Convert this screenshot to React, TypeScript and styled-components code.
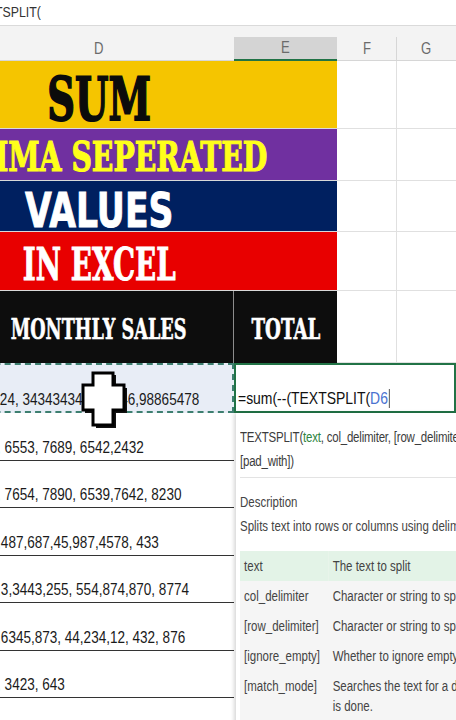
import React from "react";
import styled, { createGlobalStyle } from "styled-components";

const BODY_FONT = `"Liberation Sans", Arial, sans-serif`;
const SERIF = `"DejaVu Serif", "Liberation Serif", serif`;
const SANS_HEAVY = `"DejaVu Sans", "Liberation Sans", sans-serif`;

const GlobalStyle = createGlobalStyle`
  html, body { margin: 0; padding: 0; background: #ffffff; }
  body { font-family: ${BODY_FONT}; overflow: hidden; }
  * { box-sizing: border-box; }
`;

const Page = styled.div`
  width: 456px;
  height: 720px;
  overflow: hidden;
  background: #ffffff;
`;

/* Calibri-like narrow text: Liberation Sans compressed horizontally */
const Narrow = styled.span<{ $origin?: string }>`
  display: inline-block;
  white-space: nowrap;
  transform: scaleX(0.82);
  transform-origin: ${(p) => p.$origin ?? "left center"};
`;

const FormulaBar = styled.div`
  height: 26px;
  border-bottom: 1px solid #dadada;
  display: flex;
  align-items: center;
`;

const FormulaText = styled.div`
  font-size: 15px;
  color: #333333;
  margin-left: -5px;
  margin-top: -2px;
`;

const HeaderStrip = styled.div`
  background: #f3f3f3;
  padding-top: 11px;
`;

const Shift = styled.div`
  margin-left: -36px;
  width: 492px;
`;

const ColHeaders = styled.div`
  display: flex;
  height: 24px;
`;

const ColHeader = styled.div<{ $w: number; $active?: boolean; $divider?: boolean }>`
  width: ${(p) => p.$w}px;
  flex: none;
  display: flex;
  align-items: center;
  justify-content: center;
  font-size: 16px;
  color: #6b6b6b;
  background: ${(p) => (p.$active ? "#d4d4d4" : "transparent")};
  border-bottom: ${(p) => (p.$active ? "2px solid #217346" : "1px solid #d6d6d6")};
  border-right: ${(p) => (p.$divider ? "1px solid #d6d6d6" : "none")};
`;

const Body = styled.div`
  position: relative;
`;

const Row = styled.div<{ $h: number }>`
  display: flex;
  height: ${(p) => p.$h}px;
`;

const BandCell = styled.div<{ $bg: string; $pt: number }>`
  width: 373px;
  flex: none;
  background: ${(p) => p.$bg};
  border-bottom: 1px solid #d9d9d9;
  display: flex;
  align-items: center;
  justify-content: center;
  padding-right: 103px;
  padding-top: ${(p) => p.$pt}px;
  white-space: nowrap;
`;

const Banner = styled.span<{
  $font: string;
  $size: number;
  $color: string;
  $sx: number;
  $stroke: number;
}>`
  display: inline-block;
  font-family: ${(p) => p.$font};
  font-weight: 700;
  font-size: ${(p) => p.$size}px;
  line-height: 1;
  color: ${(p) => p.$color};
  -webkit-text-stroke: ${(p) => p.$stroke}px ${(p) => p.$color};
  transform: scaleX(${(p) => p.$sx});
  white-space: nowrap;
  flex: none;
`;

const DarkCell = styled.div<{ $w: number; $divider?: boolean }>`
  width: ${(p) => p.$w}px;
  flex: none;
  background: #0d0d0d;
  border-right: ${(p) => (p.$divider ? "1px solid #8c8c8c" : "none")};
  display: flex;
  align-items: center;
  justify-content: center;
  padding-top: 6px;
  overflow: hidden;
`;

const GridCell = styled.div<{ $w?: number; $divider?: boolean }>`
  width: ${(p) => (p.$w ? `${p.$w}px` : "auto")};
  flex: ${(p) => (p.$w ? "none" : "1")};
  background: #ffffff;
  border-bottom: 1px solid #e0e0e0;
  border-right: ${(p) => (p.$divider ? "1px solid #e0e0e0" : "none")};
`;

const RefCell = styled.div`
  width: 270px;
  flex: none;
  background: #e8edf6;
  border: 2px dashed #3e7f70;
  display: flex;
  align-items: flex-end;
  padding: 0 0 1px 0;
  overflow: hidden;
  white-space: nowrap;
  font-size: 16.5px;
  line-height: 22px;
  color: #1a1a1a;
`;

const EditCell = styled.div`
  flex: 1;
  border: 2px solid #217346;
  background: #ffffff;
  display: flex;
  align-items: flex-end;
  padding: 0 0 1px 2px;
  white-space: nowrap;
  font-size: 17px;
  line-height: 22px;
  color: #111111;
`;

const RefText = styled.span`
  color: #4a72d0;
`;

const Caret = styled.span`
  display: inline-block;
  width: 1.5px;
  height: 19px;
  background: #333333;
  margin-left: 1px;
  vertical-align: -4px;
`;

const DataCell = styled.div`
  width: 270px;
  flex: none;
  border-bottom: 1px solid #333333;
  display: flex;
  align-items: flex-end;
  padding: 0 0 2px 3px;
  overflow: hidden;
  white-space: nowrap;
  font-size: 16.5px;
  line-height: 22px;
  color: #1a1a1a;
`;

const Filler = styled.div`
  flex: 1;
  background: #ffffff;
`;

const CursorMark = styled.svg`
  position: absolute;
  left: 118px;
  top: 311px;
  width: 48px;
  height: 60px;
  overflow: visible;
`;

const Tooltip = styled.div`
  position: absolute;
  left: 272px;
  top: 352px;
  width: 560px;
  height: 420px;
  background: #ffffff;
  box-shadow: -2px 0 4px rgba(0, 0, 0, 0.16);
  padding: 12px 0 0 4px;
  font-size: 14px;
  color: #3c3c3c;
  overflow: hidden;
`;

const TipBody = styled.div`
  width: 700px;
  transform: scaleX(0.82);
  transform-origin: left top;
`;

const SigLine = styled.div`
  line-height: 24px;
  white-space: nowrap;
  letter-spacing: -0.25px;
`;

const Arg = styled.span`
  color: #2e8540;
`;

const Divider = styled.div`
  height: 1px;
  background: #e3e3e3;
  margin-top: 4px;
`;

const DescTitle = styled.div`
  margin-top: 12px;
  line-height: 24px;
  color: #444444;
  white-space: nowrap;
`;

const DescText = styled.div`
  line-height: 24px;
  color: #444444;
  white-space: nowrap;
`;

const ArgTable = styled.div`
  margin-top: 13px;
  display: grid;
  grid-template-columns: 108px 1fr;
  background: #f5f5f5;
  padding-bottom: 20px;
`;

const ArgCell = styled.div<{ $hl?: boolean }>`
  padding: 5px 0 5px 5px;
  line-height: 20px;
  white-space: nowrap;
  color: #444444;
  background: ${(p) => (p.$hl ? "#e3f3e7" : "transparent")};
`;

const bands = [
  { h: 68, bg: "#f5c500", pt: 8, text: "SUM", font: SERIF, size: 60, color: "#0b0b0b", sx: 0.64, stroke: 2 },
  { h: 52, bg: "#7030a0", pt: 5, text: "COMMA SEPERATED", font: SERIF, size: 41, color: "#ffff1a", sx: 0.69, stroke: 1.2 },
  { h: 51, bg: "#002060", pt: 8, text: "VALUES", font: SANS_HEAVY, size: 48, color: "#ffffff", sx: 0.72, stroke: 1 },
  { h: 59, bg: "#e80000", pt: 8, text: "IN EXCEL", font: SERIF, size: 44, color: "#ffffff", sx: 0.63, stroke: 1 },
];

const dataRows = [
  { h: 48, text: "7654, 6553, 7689, 6542,2432" },
  { h: 47, text: "5643, 7654, 7890, 6539,7642, 8230" },
  { h: 48, text: "3456,487,687,45,987,4578, 433" },
  { h: 47, text: "7654,3,3443,255, 554,874,870, 8774" },
  { h: 48, text: "2345,6345,873, 44,234,12, 432, 876" },
  { h: 47, text: "8765, 3423, 643" },
  { h: 47, text: "" },
];

const args = [
  { name: "text", desc: ["The text to split"], hl: true },
  { name: "col_delimiter", desc: ["Character or string to split the text into columns"] },
  { name: "[row_delimiter]", desc: ["Character or string to split the text into rows"] },
  { name: "[ignore_empty]", desc: ["Whether to ignore empty cells. Defaults to FALSE"] },
  {
    name: "[match_mode]",
    desc: ["Searches the text for a delimiter match. By default, a case-sensitive match", "is done."],
  },
];

export default function App() {
  return (
    <>
      <GlobalStyle />
      <Page>
        <FormulaBar>
          <FormulaText>
            <Narrow>TSPLIT(</Narrow>
          </FormulaText>
        </FormulaBar>
        <HeaderStrip>
          <Shift>
            <ColHeaders>
              <ColHeader $w={270}>
                <Narrow $origin="center">D</Narrow>
              </ColHeader>
              <ColHeader $w={103} $active>
                <Narrow $origin="center">E</Narrow>
              </ColHeader>
              <ColHeader $w={60} $divider>
                <Narrow $origin="center">F</Narrow>
              </ColHeader>
              <ColHeader $w={59}>
                <Narrow $origin="center">G</Narrow>
              </ColHeader>
            </ColHeaders>
          </Shift>
        </HeaderStrip>
        <Shift>
          <Body>
            {bands.map((b) => (
              <Row $h={b.h} key={b.text}>
                <BandCell $bg={b.bg} $pt={b.pt}>
                  <Banner $font={b.font} $size={b.size} $color={b.color} $sx={b.sx} $stroke={b.stroke}>
                    {b.text}
                  </Banner>
                </BandCell>
                <GridCell $w={60} $divider />
                <GridCell />
              </Row>
            ))}
            <Row $h={72}>
              <DarkCell $w={270} $divider>
                <Banner $font={SERIF} $size={28} $color="#ffffff" $sx={0.63} $stroke={0.6}>
                  MONTHLY SALES
                </Banner>
              </DarkCell>
              <DarkCell $w={103}>
                <Banner $font={SERIF} $size={28} $color="#ffffff" $sx={0.65} $stroke={0.6}>
                  TOTAL
                </Banner>
              </DarkCell>
              <GridCell $w={60} $divider />
              <GridCell />
            </Row>
            <Row $h={50}>
              <RefCell>
                <Narrow>653,424, 34343434, 454546,98865478</Narrow>
              </RefCell>
              <EditCell>
                <Narrow>
                  =sum(--(TEXTSPLIT(<RefText>D6</RefText>
                  <Caret />
                </Narrow>
              </EditCell>
            </Row>
            {dataRows.map((r, i) => (
              <Row $h={r.h} key={i}>
                <DataCell>
                  <Narrow>{r.text}</Narrow>
                </DataCell>
                <Filler />
              </Row>
            ))}
            <CursorMark viewBox="0 0 48 60">
              <path d="M14 3 H34 V16 H45 V41 H34 V56 H14 V41 H3 V16 H14 Z" fill="#111111" />
              <path
                d="M11 1 H31 V13 H42 V38 H31 V53 H11 V38 H1 V13 H11 Z"
                fill="#ffffff"
                stroke="#000000"
                strokeWidth="3"
                strokeLinejoin="miter"
              />
            </CursorMark>
            <Tooltip>
              <TipBody>
                <SigLine>
                  TEXTSPLIT(<Arg>text</Arg>, col_delimiter, [row_delimiter], [ignore_empty], [match_mode],
                </SigLine>
                <SigLine>[pad_with])</SigLine>
                <Divider />
                <DescTitle>Description</DescTitle>
                <DescText>Splits text into rows or columns using delimiters.</DescText>
                <ArgTable>
                  {args.map((a) => (
                    <React.Fragment key={a.name}>
                      <ArgCell $hl={a.hl}>{a.name}</ArgCell>
                      <ArgCell $hl={a.hl}>
                        {a.desc.map((d, j) => (
                          <div key={j}>{d}</div>
                        ))}
                      </ArgCell>
                    </React.Fragment>
                  ))}
                </ArgTable>
              </TipBody>
            </Tooltip>
          </Body>
        </Shift>
      </Page>
    </>
  );
}
